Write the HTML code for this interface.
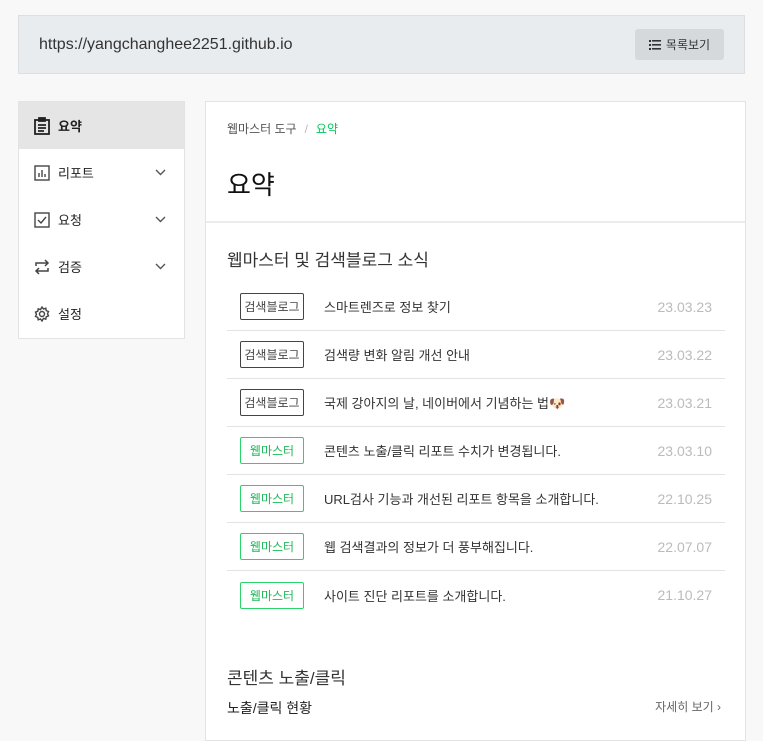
<!DOCTYPE html>
<html><head><meta charset="utf-8"><style>
*{box-sizing:border-box;margin:0;padding:0}
body{width:763px;height:720px;overflow:hidden;background:#f8f8f8;font-family:"Liberation Sans","Noto Sans CJK KR",sans-serif;color:#222;position:relative}
.top{position:absolute;left:18px;top:15px;width:727px;height:59px;background:#e9ecef;border:1px solid #dde0e3}
.top .url{position:absolute;left:20px;top:20px;font-size:16px;color:#333}
.btn{position:absolute;right:20px;top:13px;width:89px;height:31px;background:#d6d9dc;border-radius:3px;font-size:12px;color:#333;display:flex;align-items:center;justify-content:center;gap:5px}
.side{position:absolute;left:18px;top:101px;width:167px;height:238px;background:#fff;border:1px solid #e3e3e3}
.item{height:47px;display:flex;align-items:center;padding-left:15px;font-size:13px;position:relative}
.item.on{background:#e5e5e5;font-weight:bold}
.item svg{margin-right:8px}
.chev{position:absolute;right:10px;top:20px}
.main{position:absolute;left:205px;top:101px;width:541px;height:640px;background:#fff;border:1px solid #e3e3e3}
.bc{position:absolute;left:21px;top:18px;font-size:12px;color:#555}
.bc .g{color:#03c75a}
.bc .s{color:#bbb;margin:0 8px}
h1{position:absolute;left:21px;top:63px;font-size:26px;font-weight:normal;color:#111}
.hr{position:absolute;left:0;top:119px;width:100%;height:2px;background:#ececec}
h2{position:absolute;left:21px;font-size:17px;font-weight:normal;color:#333}
.rows{position:absolute;left:21px;top:181px;width:498px}
.row{height:48px;border-bottom:1px solid #e3e3e3;display:flex;align-items:center;position:relative;font-size:13px;color:#333}
.row:last-child{border-bottom:none}
.badge{width:64px;height:27px;border:1px solid #444;border-radius:2px;font-size:12px;display:flex;align-items:center;justify-content:center;margin-left:13px;margin-right:20px;color:#444}
.badge.g{border-color:#2bd36b;color:#1fb85a}
.date{position:absolute;right:13px;color:#bbb;font-size:14px}
.sub{position:absolute;left:21px;top:596px;font-size:14px;color:#222}
.more{position:absolute;right:24px;top:596px;font-size:12px;color:#666}
</style></head><body>
<div class="top"><div class="url">https://yangchanghee2251.github.io</div>
<div class="btn"><svg width="12" height="10"><g fill="#333"><rect x="0" y="0" width="2" height="2"/><rect x="3" y="0" width="9" height="1.6"/><rect x="0" y="4" width="2" height="2"/><rect x="3" y="4" width="9" height="1.6"/><rect x="0" y="8" width="2" height="2"/><rect x="3" y="8" width="9" height="1.6"/></g></svg>목록보기</div></div>
<div class="side">
<div class="item on"><svg width="16" height="18" fill="none" stroke="#222" stroke-width="1.8"><rect x="1" y="3" width="14" height="14"/><rect x="5" y="1" width="6" height="3" fill="#222"/><path d="M4 8h8M4 11h8M4 14h6"/></svg>요약</div>
<div class="item"><svg width="16" height="16" fill="none" stroke="#444" stroke-width="1.4"><rect x="1" y="1" width="14" height="14"/><path d="M5 12V8M8 12V5M11 12V9"/></svg>리포트<svg class="chev" width="11" height="7" fill="none" stroke="#555" stroke-width="1.4"><path d="M1 1l4.5 4.5L10 1"/></svg></div>
<div class="item"><svg width="16" height="17" fill="none" stroke="#444" stroke-width="1.4"><rect x="1" y="2" width="14" height="14"/><path d="M4 9l3 3 5-6"/></svg>요청<svg class="chev" width="11" height="7" fill="none" stroke="#555" stroke-width="1.4"><path d="M1 1l4.5 4.5L10 1"/></svg></div>
<div class="item"><svg width="16" height="16" fill="none" stroke="#444" stroke-width="1.5"><path d="M2 7V4h12M11 1l3 3-3 3M14 9v3H2M5 15l-3-3 3-3"/></svg>검증<svg class="chev" width="11" height="7" fill="none" stroke="#555" stroke-width="1.4"><path d="M1 1l4.5 4.5L10 1"/></svg></div>
<div class="item"><svg width="16" height="16" fill="none" stroke="#444" stroke-width="1.4"><circle cx="8" cy="8" r="2.5"/><path d="M8 1l1.5 2 2.3-.8.4 2.4 2.3.9-1 2.2 1 2.2-2.3.9-.4 2.4-2.3-.8L8 15l-1.5-2-2.3.8-.4-2.4-2.3-.9 1-2.2-1-2.2 2.3-.9.4-2.4 2.3.8z"/></svg>설정</div>
</div>
<div class="main">
<div class="bc">웹마스터 도구<span class="s">/</span><span class="g">요약</span></div>
<h1>요약</h1>
<div class="hr"></div>
<h2 style="top:144px">웹마스터 및 검색블로그 소식</h2>
<div class="rows">
<div class="row"><span class="badge">검색블로그</span>스마트렌즈로 정보 찾기<span class="date">23.03.23</span></div>
<div class="row"><span class="badge">검색블로그</span>검색량 변화 알림 개선 안내<span class="date">23.03.22</span></div>
<div class="row"><span class="badge">검색블로그</span>국제 강아지의 날, 네이버에서 기념하는 법🐶<span class="date">23.03.21</span></div>
<div class="row"><span class="badge g">웹마스터</span>콘텐츠 노출/클릭 리포트 수치가 변경됩니다.<span class="date">23.03.10</span></div>
<div class="row"><span class="badge g">웹마스터</span>URL검사 기능과 개선된 리포트 항목을 소개합니다.<span class="date">22.10.25</span></div>
<div class="row"><span class="badge g">웹마스터</span>웹 검색결과의 정보가 더 풍부해집니다.<span class="date">22.07.07</span></div>
<div class="row"><span class="badge g">웹마스터</span>사이트 진단 리포트를 소개합니다.<span class="date">21.10.27</span></div>
</div>
<h2 style="top:562px">콘텐츠 노출/클릭</h2>
<div class="sub">노출/클릭 현황</div>
<div class="more">자세히 보기 ›</div>
</div>
</body></html>
